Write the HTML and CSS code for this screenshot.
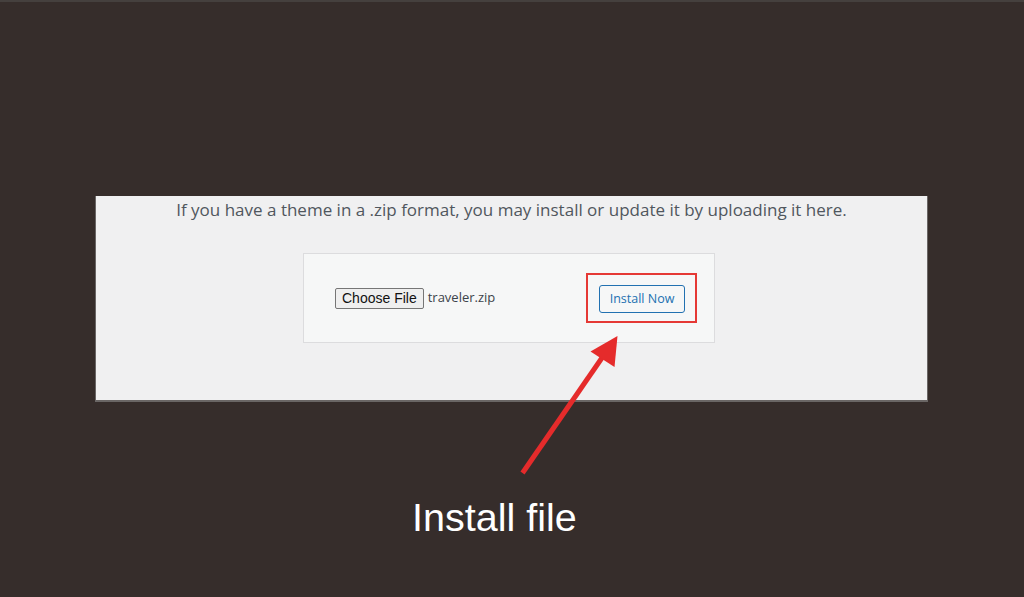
FILE: index.html
```html
<!DOCTYPE html>
<html>
<head>
<meta charset="utf-8">
<link rel="stylesheet" href="styles.css">
</head>
<body>
<div class="page">
  <section class="panel">
    <p class="intro">If you have a theme in a .zip format, you may install or update it by uploading it here.</p>
    <form class="upload">
      <span class="file">
        <span class="choose">Choose File</span>
        <span class="fname">traveler.zip</span>
      </span>
      <span class="highlight"><span class="install">Install Now</span></span>
    </form>
  </section>
  <div class="label">Install file</div>
  <svg class="arrow" width="1024" height="597" viewBox="0 0 1024 597">
    <line x1="522.5" y1="473" x2="606" y2="352" stroke="#e52b2b" stroke-width="5"/>
    <polygon points="617.5,336 590.5,351.5 614.5,367" fill="#e52b2b"/>
  </svg>
</div>
</body>
</html>
```
FILE: styles.css
```css
html, body {
  margin: 0;
  padding: 0;
}
body {
  background: #362d2b;
  width: 1024px;
  height: 597px;
  overflow: hidden;
}
.page {
  position: relative;
  width: 1024px;
  height: 597px;
  border-top: 2px solid #45403e;
  box-sizing: border-box;
  padding-top: 194px;
}
.panel {
  margin-left: 95px;
  width: 833px;
  height: 206px;
  background: #f0f0f1;
  box-sizing: border-box;
  border: 1px solid #6a6665;
  border-top: none;
  border-bottom-width: 2px;
  padding-top: 2px;
}
.intro {
  margin: 0;
  text-align: center;
  font-family: "Open Sans", sans-serif;
  font-size: 17px;
  line-height: 24px;
  color: #50575e;
}
.upload {
  margin: 31px 0 0 207px;
  width: 412px;
  height: 90px;
  box-sizing: border-box;
  background: #f6f7f7;
  border: 1px solid #dcdcde;
  display: flex;
  align-items: center;
  padding-left: 31px;
  padding-right: 17px;
  justify-content: space-between;
}
.file {
  display: flex;
  align-items: center;
  gap: 4px;
}
.choose {
  display: inline-block;
  font-family: "Liberation Sans", Arial, sans-serif;
  font-size: 14px;
  line-height: 19px;
  color: #111;
  background: #efefef;
  border: 1px solid #767676;
  border-radius: 2px;
  padding: 0 6px;
}
.fname {
  font-family: "Open Sans", sans-serif;
  font-size: 13px;
  color: #3c434a;
  margin-bottom: 2px;
}
.highlight {
  display: inline-block;
  border: 2px solid #e53935;
  padding: 10px 10px 8px 11px;
}
.install {
  display: block;
  width: 86px;
  height: 28px;
  box-sizing: border-box;
  border: 1px solid #2271b1;
  border-radius: 3px;
  background: #f6f7f7;
  color: #2271b1;
  font-family: "Open Sans", sans-serif;
  font-size: 12.5px;
  line-height: 26px;
  text-align: center;
}
.label {
  margin: 92px 0 0 412px;
  font-family: "Liberation Sans", Arial, sans-serif;
  font-size: 39.5px;
  line-height: 46px;
  color: #ffffff;
}
.arrow {
  position: absolute;
  left: 0;
  top: -2px;
}
```
